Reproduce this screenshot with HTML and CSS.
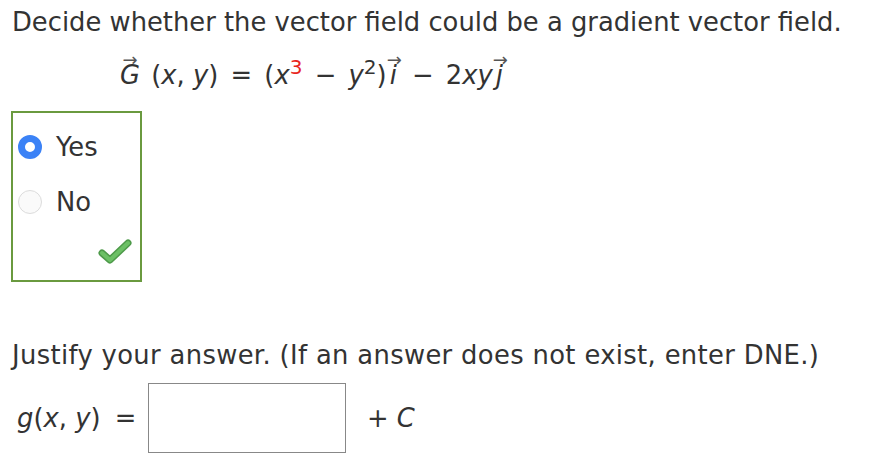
FILE: index.html
```html
<!DOCTYPE html>
<html>
<head>
	<title>Gradient Vector Field</title>
	<link rel="stylesheet" href="styles.css">
</head>
<body>
<div id="question">

	<p class="prompt">Decide whether the vector field could be a gradient vector field.</p>

	<div class="formula">
		<span class="vec"><i>G</i></span> (<i>x</i>, <i>y</i>) <span class="op">=</span> (<i>x</i><sup class="wrong">3</sup> <span class="op">&minus;</span> <i>y</i><sup>2</sup>)<span class="vec"><i>i</i></span> <span class="op">&minus;</span> 2<i>xy</i><span class="vec"><i>j</i></span>
	</div>

	<div class="choices">
		<label class="choice"><span class="radio checked"></span>Yes</label>
		<label class="choice"><span class="radio"></span>No</label>
		<div class="mark">
			<svg width="34" height="26" viewBox="0 0 34 26">
				<path d="M4 15 L12 22 L30 5" fill="none" stroke="#4e9a4a" stroke-width="7" stroke-linecap="round" stroke-linejoin="round"/>
				<path d="M4 15 L12 22 L30 5" fill="none" stroke="#6cc065" stroke-width="4" stroke-linecap="round" stroke-linejoin="round"/>
			</svg>
		</div>
	</div>

	<p class="prompt justify">Justify your answer. (If an answer does not exist, enter DNE.)</p>

	<div class="answer">
		<span class="lhs"><i>g</i>(<i>x</i>, <i>y</i>) <span class="op">=</span></span>
		<span class="blank"></span>
		<span class="rhs">+ <i>C</i></span>
	</div>

</div>
</body>
</html>
```

FILE: styles.css
```css
/* Reset */

* { margin: 0; padding: 0; }

body {
	background-color: white;
	font-family: "DejaVu Sans", Verdana, sans-serif;
	color: #333333;
	font-size: 25.8px;
}

#question {
	padding: 6px 0 0 12px;
}

.prompt {
	line-height: 32px;
}


/* Formula */

.formula {
	margin: 18px 0 0 105px;
	line-height: 38px;
	height: 38px;
}

.formula .op {
	margin: 0 4px;
}

.formula sup {
	font-size: 78%;
	vertical-align: 0.5em;
	line-height: 0;
}

.formula .wrong {
	color: #e8251c;
}

.vec {
	position: relative;
	display: inline-block;
	padding: 0 3px;
}

.vec:before {
	content: "\2192";
	position: absolute;
	left: 0; right: 0;
	top: -15px;
	text-align: center;
	font-size: 18px;
	color: #555555;
}


/* Choices */

.choices {
	width: 127px;
	height: 167px;
	margin: 17px 0 0 -1px;
	border: solid 2px #6a9a3f;
	position: relative;
}

.choice {
	display: flex;
	align-items: center;
	height: 28px;
	margin-top: 20px;
	margin-bottom: 27px;
}

.choice + .choice {
	margin-top: 0;
}

.radio {
	width: 24px;
	height: 24px;
	border-radius: 50%;
	margin: 0 14px 0 5px;
	box-sizing: border-box;
	border: solid 1px #dcdcdc;
	background: #fafafa;
}

.radio.checked {
	border: solid 7px #3b82f6;
	background: white;
}

.mark {
	position: absolute;
	right: 8px;
	bottom: 10px;
}


/* Answer */

.justify {
	margin-top: 57px;
	letter-spacing: 0.35px;
}

.answer {
	display: flex;
	align-items: center;
	margin-top: 12px;
}

.lhs {
	margin-left: 5px;
	width: 131px;
}

.lhs .op {
	margin-left: 6px;
}

.blank {
	width: 196px;
	height: 68px;
	border: solid 1px #888888;
}

.rhs {
	margin-left: 21px;
}
```
